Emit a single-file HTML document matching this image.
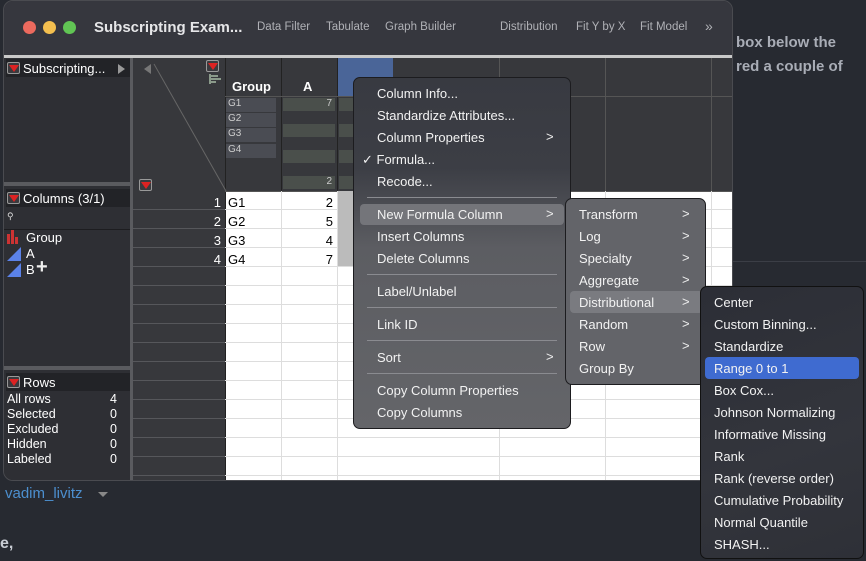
<!DOCTYPE html>
<html><head><style>
*{margin:0;padding:0;box-sizing:border-box}
body{width:866px;height:561px;overflow:hidden;background:#272a31;font-family:"Liberation Sans",sans-serif;position:relative;color:#fff}
.a{position:absolute}
.t{position:absolute;white-space:nowrap}
.tri{position:absolute;width:13px;height:12px;border:1px solid #999;background:#3a3a3e;border-radius:2px}
.tri:after{content:"";position:absolute;left:1px;top:2px;border-left:5px solid transparent;border-right:5px solid transparent;border-top:7px solid #d22}
.mi{position:absolute;font-size:13px;color:#f2f2f2;white-space:nowrap}
.chev{position:absolute;font-size:13px;color:#eee}
.sep{position:absolute;height:1px;background:#8a8b90}
.hl{position:absolute;border-radius:4px}
.gl{position:absolute;background:#ddd}
</style></head><body>
<div class="t" style="left:736px;top:34px;font-size:15px;color:#a9adb6;font-weight:bold">box below the</div>
<div class="t" style="left:736px;top:58px;font-size:15px;color:#a9adb6;font-weight:bold">red a couple of</div>
<div class="a" style="left:732px;top:261px;width:134px;height:1px;background:#3b3e46"></div>
<div class="t" style="left:5px;top:485px;font-size:15px;color:#4c8fcf">vadim_livitz</div>
<div class="a" style="left:98px;top:492px;border-left:5px solid transparent;border-right:5px solid transparent;border-top:5px solid #888"></div>
<div class="t" style="left:0;top:535px;font-size:16px;color:#c8ccd3;font-weight:bold">e,</div>

<div class="a" style="left:3px;top:0;width:730px;height:481px;border-radius:10px;background:#2d2e33;overflow:hidden;border:1px solid #4a4b50">
 <div class="a" style="left:0;top:0;width:730px;height:54px;background:#36373e"></div>
 <div class="a" style="left:0;top:54px;width:730px;height:3px;background:#c9c9c9"></div>
 <div class="a" style="left:19px;top:20px;width:13px;height:13px;border-radius:50%;background:#ec6a5e"></div>
 <div class="a" style="left:39px;top:20px;width:13px;height:13px;border-radius:50%;background:#f4bf4f"></div>
 <div class="a" style="left:59px;top:20px;width:13px;height:13px;border-radius:50%;background:#61c554"></div>
 <div class="t" style="left:90px;top:18px;font-size:15px;font-weight:bold;color:#e6e6e8">Subscripting Exam...</div>
 <div class="t" style="left:253px;top:20px;font-size:11.5px;color:#b0b1b6">Data Filter</div>
 <div class="t" style="left:322px;top:20px;font-size:11.5px;color:#b0b1b6">Tabulate</div>
 <div class="t" style="left:381px;top:20px;font-size:11.5px;color:#b0b1b6">Graph Builder</div>
 <div class="t" style="left:496px;top:20px;font-size:11.5px;color:#b0b1b6">Distribution</div>
 <div class="t" style="left:572px;top:20px;font-size:11.5px;color:#b0b1b6">Fit Y by X</div>
 <div class="t" style="left:636px;top:20px;font-size:11.5px;color:#b0b1b6">Fit Model</div>
 <div class="t" style="left:701px;top:17px;font-size:14px;color:#b0b1b6">»</div>

 <div class="a" style="left:0;top:57px;width:126px;height:424px;background:#2e2f34"></div>
 <div class="a" style="left:126px;top:57px;width:3px;height:424px;background:#5a5b5f"></div>
 <div class="a" style="left:2px;top:58px;width:124px;height:18px;background:#222327"></div>
 <div class="tri" style="left:3px;top:61px"></div>
 <div class="t" style="left:19px;top:60px;font-size:13px">Subscripting...</div>
 <div class="a" style="left:114px;top:63px;border-top:5px solid transparent;border-bottom:5px solid transparent;border-left:7px solid #999"></div>
 <div class="a" style="left:0;top:181px;width:126px;height:4px;background:#5a5b5f"></div>
 <div class="a" style="left:2px;top:188px;width:124px;height:18px;background:#222327"></div>
 <div class="tri" style="left:3px;top:191px"></div>
 <div class="t" style="left:19px;top:190px;font-size:13px">Columns (3/1)</div>
 <div class="t" style="left:3px;top:210px;font-size:9px;color:#ddd">&#9906;</div>
 <div class="a" style="left:0;top:228px;width:126px;height:1px;background:#1d1d20"></div>
 <div class="a" style="left:3px;top:233px;width:3px;height:10px;background:#c33"></div>
 <div class="a" style="left:7px;top:229px;width:3px;height:14px;background:#c33"></div>
 <div class="a" style="left:11px;top:236px;width:3px;height:7px;background:#c33"></div>
 <div class="t" style="left:22px;top:229px;font-size:13px">Group</div>
 <svg class="a" style="left:3px;top:246px" width="14" height="14"><polygon points="0,14 14,0 14,14" fill="#5b82e8"/></svg>
 <div class="t" style="left:22px;top:245px;font-size:13px">A</div>
 <svg class="a" style="left:3px;top:262px" width="14" height="14"><polygon points="0,14 14,0 14,14" fill="#5b82e8"/></svg>
 <div class="t" style="left:22px;top:261px;font-size:13px">B</div>
 <div class="t" style="left:32px;top:255px;font-size:20px;font-weight:bold;color:#eee">+</div>
 <div class="a" style="left:0;top:365px;width:126px;height:4px;background:#5a5b5f"></div>
 <div class="a" style="left:2px;top:372px;width:124px;height:18px;background:#222327"></div>
 <div class="tri" style="left:3px;top:375px"></div>
 <div class="t" style="left:19px;top:374px;font-size:13px">Rows</div>
 <div class="t" style="left:3px;top:391px;font-size:12.5px;line-height:15px">All rows<br>Selected<br>Excluded<br>Hidden<br>Labeled</div>
 <div class="t" style="left:106px;top:391px;font-size:12.5px;line-height:15px">4<br>0<br>0<br>0<br>0</div>

 <div class="a" style="left:129px;top:57px;width:92px;height:424px;background:#37383c"></div>
 <div class="a" style="left:221px;top:57px;width:509px;height:133px;background:#37383c"></div>
 <div class="a" style="left:221px;top:190px;width:509px;height:291px;background:#fff"></div>
 <div class="a" style="left:333px;top:57px;width:56px;height:38px;background:#4a6598"></div>
 <div class="a" style="left:221px;top:57px;width:1px;height:424px;background:#222"></div>
 <div class="a" style="left:277px;top:57px;width:1px;height:133px;background:#222"></div>
 <div class="a" style="left:333px;top:57px;width:1px;height:133px;background:#222"></div>
 <div class="a" style="left:495px;top:57px;width:1px;height:133px;background:#555"></div>
 <div class="a" style="left:601px;top:57px;width:1px;height:133px;background:#555"></div>
 <div class="a" style="left:707px;top:57px;width:1px;height:133px;background:#555"></div>
 <div class="a" style="left:221px;top:95px;width:509px;height:1px;background:#555"></div>
 <div class="a" style="left:129px;top:190px;width:601px;height:1px;background:#555"></div>
 <div class="a" style="left:140px;top:63px;border-top:5px solid transparent;border-bottom:5px solid transparent;border-right:7px solid #777"></div>
 <svg class="a" style="left:145px;top:62px" width="80" height="130"><line x1="5" y1="1" x2="77" y2="128" stroke="#666"/></svg>
 <div class="tri" style="left:202px;top:59px"></div>
 <div class="a" style="left:205px;top:73px;width:2px;height:10px;background:#8a9a8a"></div>
 <div class="a" style="left:207px;top:74px;width:7px;height:2px;background:#8a9a8a"></div>
 <div class="a" style="left:207px;top:77px;width:10px;height:2px;background:#8a9a8a"></div>
 <div class="a" style="left:207px;top:80px;width:5px;height:2px;background:#8a9a8a"></div>
 <div class="tri" style="left:135px;top:178px"></div>
 <div class="t" style="left:228px;top:78px;font-size:13px;font-weight:bold">Group</div>
 <div class="t" style="left:299px;top:78px;font-size:13px;font-weight:bold">A</div>
 <div class="a" style="left:222px;top:97px;width:50px;height:14px;background:#4a4c53;font-size:10px;color:#ccc;padding-left:2px">G1</div>
 <div class="a" style="left:222px;top:112px;width:50px;height:14px;background:#4a4c53;font-size:10px;color:#ccc;padding-left:2px">G2</div>
 <div class="a" style="left:222px;top:127px;width:50px;height:14px;background:#4a4c53;font-size:10px;color:#ccc;padding-left:2px">G3</div>
 <div class="a" style="left:222px;top:143px;width:50px;height:14px;background:#4a4c53;font-size:10px;color:#ccc;padding-left:2px">G4</div>
 <div class="a" style="left:279px;top:97px;width:52px;height:13px;background:#4a4f4b;font-size:10px;color:#ccc;text-align:right;padding-right:3px">7</div>
 <div class="a" style="left:279px;top:123px;width:52px;height:13px;background:#4a4f4b"></div>
 <div class="a" style="left:279px;top:149px;width:52px;height:13px;background:#4a4f4b"></div>
 <div class="a" style="left:279px;top:175px;width:52px;height:13px;background:#4a4f4b;font-size:10px;color:#ccc;text-align:right;padding-right:3px">2</div>
 <div class="a" style="left:335px;top:97px;width:20px;height:91px;background:repeating-linear-gradient(#4a4f4b 0 13px,#37383c 13px 26px)"></div>
 <div class="a" style="left:129px;top:190px;width:92px;height:291px;background:repeating-linear-gradient(#37383c 0 18px,#56575b 18px 19px)"></div>
 <div class="a" style="left:221px;top:190px;width:509px;height:291px;background:repeating-linear-gradient(transparent 0 18px,#ddd 18px 19px)"></div>
 <div class="gl" style="left:277px;top:190px;width:1px;height:291px"></div>
 <div class="gl" style="left:333px;top:190px;width:1px;height:291px"></div>
 <div class="gl" style="left:495px;top:190px;width:1px;height:291px"></div>
 <div class="gl" style="left:601px;top:190px;width:1px;height:291px"></div>
 <div class="gl" style="left:707px;top:190px;width:1px;height:291px"></div>
 <div class="a" style="left:334px;top:190px;width:20px;height:75px;background:#bbb"></div>
 <div class="t" style="left:129px;top:192px;width:88px;text-align:right;font-size:13px;line-height:19px">1<br>2<br>3<br>4</div>
 <div class="t" style="left:224px;top:192px;font-size:13px;line-height:19px;color:#000">G1<br>G2<br>G3<br>G4</div>
 <div class="t" style="left:277px;top:192px;width:52px;text-align:right;font-size:13px;line-height:19px;color:#000">2<br>5<br>4<br>7</div>
</div>

<div class="a" style="left:353px;top:77px;width:218px;height:352px;border-radius:7px;border:1px solid #1c1c1f;background:linear-gradient(#383a41 0,#3c3e45 90px,#5c5d62 170px,#646569 100%)"></div>
<div class="hl" style="left:360px;top:204px;width:204px;height:21px;background:#74757a"></div>
<div class="mi" style="left:377px;top:86px">Column Info...</div>
<div class="mi" style="left:377px;top:108px">Standardize Attributes...</div>
<div class="mi" style="left:377px;top:130px">Column Properties</div><div class="chev" style="left:546px;top:129px">&gt;</div>
<div class="mi" style="left:362px;top:152px">✓ Formula...</div>
<div class="mi" style="left:377px;top:174px">Recode...</div>
<div class="sep" style="left:367px;top:197px;width:190px"></div>
<div class="mi" style="left:377px;top:207px">New Formula Column</div><div class="chev" style="left:546px;top:206px">&gt;</div>
<div class="mi" style="left:377px;top:229px">Insert Columns</div>
<div class="mi" style="left:377px;top:251px">Delete Columns</div>
<div class="sep" style="left:367px;top:274px;width:190px"></div>
<div class="mi" style="left:377px;top:284px">Label/Unlabel</div>
<div class="sep" style="left:367px;top:307px;width:190px"></div>
<div class="mi" style="left:377px;top:317px">Link ID</div>
<div class="sep" style="left:367px;top:340px;width:190px"></div>
<div class="mi" style="left:377px;top:350px">Sort</div><div class="chev" style="left:546px;top:349px">&gt;</div>
<div class="sep" style="left:367px;top:373px;width:190px"></div>
<div class="mi" style="left:377px;top:383px">Copy Column Properties</div>
<div class="mi" style="left:377px;top:405px">Copy Columns</div>

<div class="a" style="left:565px;top:198px;width:141px;height:187px;border-radius:7px;border:1px solid #1c1c1f;background:#636469"></div>
<div class="hl" style="left:570px;top:291px;width:133px;height:22px;background:#7a7b80"></div>
<div class="mi" style="left:579px;top:207px">Transform</div><div class="chev" style="left:682px;top:206px">&gt;</div>
<div class="mi" style="left:579px;top:229px">Log</div><div class="chev" style="left:682px;top:228px">&gt;</div>
<div class="mi" style="left:579px;top:251px">Specialty</div><div class="chev" style="left:682px;top:250px">&gt;</div>
<div class="mi" style="left:579px;top:273px">Aggregate</div><div class="chev" style="left:682px;top:272px">&gt;</div>
<div class="mi" style="left:579px;top:295px">Distributional</div><div class="chev" style="left:682px;top:294px">&gt;</div>
<div class="mi" style="left:579px;top:317px">Random</div><div class="chev" style="left:682px;top:316px">&gt;</div>
<div class="mi" style="left:579px;top:339px">Row</div><div class="chev" style="left:682px;top:338px">&gt;</div>
<div class="mi" style="left:579px;top:361px">Group By</div>

<div class="a" style="left:700px;top:286px;width:164px;height:273px;border-radius:7px;border:1px solid #111;background:linear-gradient(160deg,#2c2e36,#33353c 60%,#2e3037)"></div>
<div class="hl" style="left:705px;top:357px;width:154px;height:22px;background:#3f6bd0"></div>
<div class="mi" style="left:714px;top:295px">Center</div>
<div class="mi" style="left:714px;top:317px">Custom Binning...</div>
<div class="mi" style="left:714px;top:339px">Standardize</div>
<div class="mi" style="left:714px;top:361px">Range 0 to 1</div>
<div class="mi" style="left:714px;top:383px">Box Cox...</div>
<div class="mi" style="left:714px;top:405px">Johnson Normalizing</div>
<div class="mi" style="left:714px;top:427px">Informative Missing</div>
<div class="mi" style="left:714px;top:449px">Rank</div>
<div class="mi" style="left:714px;top:471px">Rank (reverse order)</div>
<div class="mi" style="left:714px;top:493px">Cumulative Probability</div>
<div class="mi" style="left:714px;top:515px">Normal Quantile</div>
<div class="mi" style="left:714px;top:537px">SHASH...</div>
</body></html>
